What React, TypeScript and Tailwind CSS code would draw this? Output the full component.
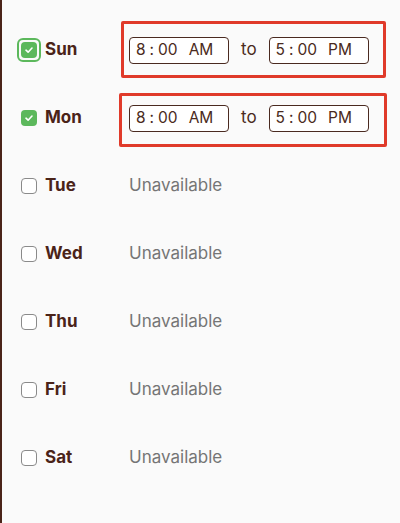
import { Fragment } from 'react';

const DAYS = [
  { day: 'Sun', on: true, focus: true },
  { day: 'Mon', on: true },
  { day: 'Tue', on: false },
  { day: 'Wed', on: false },
  { day: 'Thu', on: false },
  { day: 'Fri', on: false },
  { day: 'Sat', on: false },
];

function Check({ on, focus }: { on: boolean; focus?: boolean }) {
  const box = on ? (
    <span className="flex w-[16px] h-[16px] items-center justify-center rounded-[4px] bg-[#5cb85c]">
      <svg width="10" height="10" viewBox="0 0 10 10" fill="none">
        <path d="M2 5.2 L4.1 7.2 L8 3" stroke="white" strokeWidth="1.6" strokeLinecap="round" strokeLinejoin="round" />
      </svg>
    </span>
  ) : (
    <span className="block w-[16px] h-[16px] rounded-[4px] border border-[#8a8a8a] bg-white" />
  );
  return (
    <span className={`flex w-[24px] h-[24px] items-center justify-center rounded-[6px] border-2 ${focus ? 'border-[#5cb85c]' : 'border-transparent'}`}>
      {box}
    </span>
  );
}

function TimeBox({ h, ap }: { h: string; ap: string }) {
  return (
    <div className="flex items-center w-[100px] h-[27px] pl-[6px] border border-[#4a2a20] rounded-[4px] bg-white text-[15.5px] text-[#4a2a20]">
      <span>{h}</span>
      <span className="mx-[4px]">:</span>
      <span>00</span>
      <span className="ml-[11px]">{ap}</span>
    </div>
  );
}

export default function App() {
  return (
    <div className="relative min-h-[523px] bg-[#fafafa] border-l-2 border-[#4a2419] pt-[16px]" style={{ fontFamily: 'Inter, "Noto Sans", sans-serif' }}>
      {DAYS.map(d => (
        <div key={d.day} className="flex items-center h-[68px]">
          <div className="ml-[15px]"><Check on={d.on} focus={d.focus} /></div>
          <span className="ml-[4px] w-[84px] text-[17px] font-bold text-[#4a2318]">{d.day}</span>
          {d.on ? (
            <Fragment>
              <TimeBox h="8" ap="AM" />
              <span className="mx-[12px] text-[17px] text-[#4a2a20]">to</span>
              <TimeBox h="5" ap="PM" />
            </Fragment>
          ) : (
            <span className="text-[17px] text-[#757575]">Unavailable</span>
          )}
        </div>
      ))}
      {/* annotation boxes */}
      <div className="absolute left-[119px] top-[21px] w-[265px] h-[57px] border-[3px] border-[#e03a2a] rounded-[2px] pointer-events-none" />
      <div className="absolute left-[117px] top-[93px] w-[268px] h-[54px] border-[3px] border-[#e03a2a] rounded-[2px] pointer-events-none" />
    </div>
  );
}
